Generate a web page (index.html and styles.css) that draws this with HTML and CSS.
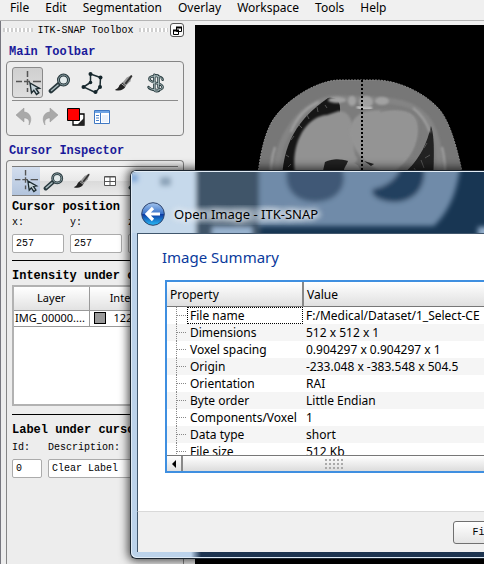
FILE: index.html
```
<!DOCTYPE html>
<html lang="en">
<head>
    <meta charset="UTF-8" />
    <meta name="viewport" content="width=device-width, initial-scale=1" />
    <title>ITK-SNAP</title>
    <link rel="stylesheet" href="styles.css">
</head>
<body>
    <!-- shared toolbar icons -->
    <svg class="defs" width="0" height="0" aria-hidden="true">
        <symbol id="i-cross" viewBox="0 0 28 26">
            <path d="M13.5 1v6M13.5 9v6M13.5 18v4M2 11.500h6M10 11.500h6M19 11.500h8" stroke="#555" stroke-width="1.500" fill="none" />
            <path d="M16 13l1.500 10 2.300-2.600 2.700 4 2.300-1.600-2.700-3.900 3.400-.6z" fill="#c5d3da" stroke="#1c2b30" stroke-width="1.400" />
        </symbol>
        <symbol id="i-zoom" viewBox="0 0 24 24">
            <path d="M3 20l8-7" stroke="#27373c" stroke-width="4.600" stroke-linecap="round" />
            <path d="M3.500 19.500l6.500-5.500" stroke="#a9babd" stroke-width="1.500" stroke-linecap="round" />
            <circle cx="15.500" cy="9" r="5" fill="#e3ebec" stroke="#27373c" stroke-width="3" />
            <circle cx="15.500" cy="9" r="5" fill="none" stroke="#8ca2a6" />
        </symbol>
        <symbol id="i-poly" viewBox="0 0 24 24">
            <path d="M10.500 3l10 3.500-.5 9.500-4.500 5.500-12-5.500 7-4.500z" fill="none" stroke="#1d2e33" stroke-width="1.500" />
            <g fill="#14252b">
                <circle cx="10.500" cy="3" r="2" /><circle cx="20.500" cy="6.500" r="2" /><circle cx="20" cy="16" r="2" />
                <circle cx="15.500" cy="21" r="2" /><circle cx="3.500" cy="16" r="2" /><circle cx="10.500" cy="11.500" r="1.800" />
            </g>
        </symbol>
        <symbol id="i-brush" viewBox="0 0 24 24">
            <path d="M21 3l-2 7-5 5-4-3 5-6z" fill="#9a9a9a" />
            <path d="M20.500 4l-7 9" stroke="#333" stroke-width="2" />
            <path d="M14 15l-4-3.500-3 3c-1 3-2.500 4-5 5 5 1.500 10 .5 12-4.500z" fill="#222" />
            <path d="M9 12.500l4.500 3.500" stroke="#c8c8c8" stroke-width="1" />
        </symbol>
        <symbol id="i-snake" viewBox="0 0 24 24">
            <path d="M20 8c0-5-16-6-16-1 0 6 16 4 16 10 0 5-15 4-17 0M10 2v18c0 3 6 2 6 0M10 5c0-3 5-3 5 0v12" fill="none" stroke="#22363a" stroke-width="3" stroke-linecap="round" />
            <path d="M20 8c0-5-16-6-16-1 0 6 16 4 16 10 0 5-15 4-17 0M10 2v18c0 3 6 2 6 0M10 5c0-3 5-3 5 0v12" fill="none" stroke="#b5c5c7" stroke-width="1" stroke-linecap="round" />
        </symbol>
        <symbol id="i-undo" viewBox="0 0 20 20">
            <path d="M2 8l8-7v4c6 0 9 7 5 13 1-5-1-7-5-7v4z" fill="#a9a9a9" stroke="#969696" stroke-width=".5" />
        </symbol>
        <symbol id="i-label" viewBox="0 0 20 20">
            <path d="M7 7h11v11h-11z" fill="#fff" stroke="#000" stroke-width="1.300" />
            <path d="M18 11v7h-7z" fill="#222" />
            <path d="M1.500 1.500h12v12h-12z" fill="#f00" stroke="#000" />
        </symbol>
        <symbol id="i-layout" viewBox="0 0 16 14">
            <path d="M.5.5h15v13h-15z" fill="#fff" stroke="#3f78c3" />
            <path d="M1 1h14v2h-14z" fill="#6fa4e4" />
            <path d="M6.500 3v10" stroke="#3f78c3" />
            <path d="M2 5.500h3M2 8h3M2 10.500h3" stroke="#4a80c8" />
            <path d="M8 5h6v7h-6z" fill="#eaf1fb" />
        </symbol>
        <symbol id="i-table" viewBox="0 0 12 12">
            <path d="M.5 1.500h11v9h-11z" fill="#fff" stroke="#555" />
            <path d="M1 2h10M1 6.500h10M6 2v9" stroke="#555" fill="none" />
        </symbol>
    </svg>

    <nav class="menubar">
        <button>File</button>
        <button>Edit</button>
        <button>Segmentation</button>
        <button>Overlay</button>
        <button>Workspace</button>
        <button>Tools</button>
        <button>Help</button>
    </nav>

    <main class="workspace">
        <aside class="sidebar">
            <div class="dock-title">
                <span class="grip"></span>
                <span>ITK-SNAP Toolbox</span>
                <span class="grip"></span>
                <button class="float-btn" aria-label="Float">
                    <svg width="9" height="9" viewBox="0 0 9 9"><path d="M3.500 1.500h5v4h-5zM.5 4.500h5v4h-5z" fill="#fff" stroke="#000" /><path d="M3 1.500h6M0 4.500h6" stroke="#000" stroke-width="2" /></svg>
                </button>
            </div>

            <h2 class="panel-title">Main Toolbar</h2>
            <div class="panel main-tools">
                <div class="tools">
                    <button class="tool active" aria-label="Crosshair"><svg width="28" height="26"><use href="#i-cross" /></svg></button>
                    <button class="tool" aria-label="Zoom"><svg width="24" height="24"><use href="#i-zoom" /></svg></button>
                    <button class="tool" aria-label="Polygon"><svg width="24" height="24"><use href="#i-poly" /></svg></button>
                    <button class="tool" aria-label="Paintbrush"><svg width="22" height="22"><use href="#i-brush" /></svg></button>
                    <button class="tool" aria-label="Snake"><svg width="20" height="22"><use href="#i-snake" /></svg></button>
                </div>
                <div class="tools actions">
                    <button class="tool" aria-label="Undo"><svg width="20" height="20"><use href="#i-undo" /></svg></button>
                    <button class="tool" aria-label="Redo"><svg class="flip" width="20" height="20"><use href="#i-undo" /></svg></button>
                    <button class="tool" aria-label="Label color"><svg width="20" height="20"><use href="#i-label" /></svg></button>
                    <button class="tool" aria-label="Layout"><svg width="16" height="14"><use href="#i-layout" /></svg></button>
                </div>
            </div>

            <h2 class="panel-title">Cursor Inspector</h2>
            <div class="panel inspector">
                <div class="tabs">
                    <button class="tab active" aria-label="Cursor"><svg width="26" height="24"><use href="#i-cross" /></svg></button>
                    <button class="tab" aria-label="Zoom"><svg width="22" height="22"><use href="#i-zoom" /></svg></button>
                    <button class="tab" aria-label="Paintbrush"><svg width="20" height="20"><use href="#i-brush" /></svg></button>
                    <button class="tab" aria-label="Table"><svg width="12" height="12"><use href="#i-table" /></svg></button>
                    <button class="tab" aria-label="Zoom all"><svg width="20" height="20"><use href="#i-zoom" /></svg></button>
                </div>

                <section class="block position">
                    <h3>Cursor position</h3>
                    <div class="fields">
                        <label class="coord">x:<input type="text" value="257" /></label>
                        <label class="coord">y:<input type="text" value="257" /></label>
                        <label class="coord">z:<input type="text" value="1" /></label>
                    </div>
                </section>

                <section class="block">
                    <h3>Intensity under cursor</h3>
                    <div class="layer-list">
                        <table>
                            <thead>
                                <tr><th>Layer</th><th>Intensity</th></tr>
                            </thead>
                            <tbody>
                                <tr><td>IMG_00000....</td><td><span class="swatch"></span>122</td></tr>
                            </tbody>
                        </table>
                    </div>
                </section>

                <section class="block">
                    <h3>Label under cursor</h3>
                    <div class="fields label-fields">
                        <label class="id">Id:<input type="text" value="0" /></label>
                        <label class="desc">Description:<input type="text" value="Clear Label" /></label>
                    </div>
                </section>
            </div>
        </aside>

        <div class="view">
            <svg class="slice" viewBox="0 0 289 160">
                <defs>
                    <filter id="soft"><feGaussianBlur stdDeviation="1.200" /></filter>
                    <filter id="edge"><feGaussianBlur stdDeviation=".6" /></filter>
                </defs>
                <path d="M62 160C64 132 70 105 80 92C94 73 122 56 143 55H180C205 55 232 70 244 84C257 99 264 132 270 160z" fill="#777" stroke="#8c8c8c" stroke-dasharray="2 1" />
                <path d="M81 160C80 138 84 118 98 99C110 82 128 73 142 73C170 76 205 71 225 87C243 101 246 128 245 160z" fill="#7c7c7c" stroke="#848484" stroke-width="6" filter="url(#soft)" />
                <path d="M87 160C87 118 103 94 133 73C142 72 146 76 145 88L138 92L110 112L105 160H87z" fill="#161616" filter="url(#edge)" />
                <path d="M236 101C240 112 239 135 238 160H190C208 151 228 137 236 101z" fill="#202020" filter="url(#edge)" />
                <!-- lung vessels -->
                <path d="M96 115l3-4M104 100l3 3M112 90l2 4M122 82l1 5M130 80l2 3M91 130l3 2M93 142l3-3M232 118l-3 5M235 130l-5 3M226 135l3 8M219 143l4 6M211 148l2 7M233 145l-4 4M204 152l4 3" stroke="#555" fill="none" />
                <path d="M96 107C102 91 112 82 124 77M218 83c8 6 13 13 17 24M80 122c-4 12-4 20-4 36M247 122c3 12 3 20 3 36" fill="none" stroke="#a4a4a4" stroke-width="2" filter="url(#soft)" />
                <path d="M102 160C92 120 111 91 132 90L144 86C165 86 155 125 162 133C164 142 141 144 132 160z" fill="#929292" filter="url(#soft)" />
                <path d="M156 115C151 98 163 87 174 86C195 84 220 83 223 96C227 119 211 146 193 148C180 147 162 132 156 115z" fill="#949494" filter="url(#soft)" />
                <path d="M185 86q34-10 39 13t-20 46" fill="none" stroke="#7c7c7c" stroke-width="2" filter="url(#soft)" />
                <g fill="#a2a2a2" filter="url(#soft)">
                    <ellipse cx="142" cy="75" rx="9" ry="3" /><ellipse cx="157" cy="76" rx="4" ry="5" />
                    <ellipse cx="171" cy="77" rx="7" ry="6" /><ellipse cx="187" cy="76" rx="7" ry="4" />
                </g>
                <path d="M162 82q8 3 15 1" stroke="#ddd" stroke-width="2" fill="none" filter="url(#soft)" />
                <path d="M130 137c8-4 16-3 23-1l-6 14h-20zM169 136l10 3-3 2z" fill="#222" filter="url(#edge)" />
                <ellipse cx="157" cy="146" rx="8" ry="8" fill="#929292" />
                <path d="M167 55v105" stroke="#000" stroke-width="2" stroke-dasharray="2 2" />
            </svg>
        </div>
    </main>

    <div class="dialog" role="dialog" aria-labelledby="dlg-title">
        <header class="titlebar">
            <svg class="glass" width="484" height="62" viewBox="0 0 484 62" aria-hidden="true">
                <defs><filter id="blur" x="-10%" y="-10%" width="120%" height="120%"><feGaussianBlur stdDeviation="2.500" /></filter></defs>
                <rect width="484" height="62" fill="#183653" />
                <g filter="url(#blur)">
                    <path d="M-10-10H64V80H-10z" fill="#c6d9eb" />
                    <path d="M64-10h64v84h-64z" fill="#405469" />
                    <path d="M127-10H329C325 20 318 38 302 54H127z" fill="#6f8ba9" />
                    <path d="M155-4c-4 20 8 34 28 34s34-14 27-34z" fill="#405876" />
                    <path d="M292-4c2 20-10 33-28 34-14 0-27-6-23-13 12-2 25-10 28-23z" fill="#24415f" />
                    <path d="M80 55h40v10h-40zM346 55h20v10h-20z" fill="#9ab4d0" />
                    <path d="M28 5h11v9h-11z" fill="#8ba2b8" />
                    <path d="M-2 2h8v8h-8z" fill="#79a6d8" />
                </g>
                <ellipse cx="112" cy="43" rx="78" ry="8" fill="#c8d6e4" opacity=".5" filter="url(#blur)" />
            </svg>
            <button class="back" aria-label="Back">
                <svg width="24" height="24" viewBox="0 0 24 24">
                    <defs>
                        <linearGradient id="orb" x2="0" y2="1">
                            <stop offset="0" stop-color="#a4c5ee" /><stop offset=".48" stop-color="#3a73ca" />
                            <stop offset=".5" stop-color="#0a35a0" /><stop offset="1" stop-color="#28bdf8" />
                        </linearGradient>
                    </defs>
                    <circle cx="12" cy="12" r="11.300" fill="url(#orb)" stroke="#30456d" />
                    <path d="M12 6l-6 6 6 6M7 12h12" fill="none" stroke="#fff" stroke-width="3.200" />
                </svg>
            </button>
            <span id="dlg-title">Open Image - ITK-SNAP</span>
        </header>
        <div class="page">
            <h1>Image Summary</h1>
            <div class="summary">
                <div class="rows">
                    <table>
                        <thead>
                            <tr><th>Property</th><th>Value</th></tr>
                        </thead>
                        <tbody>
                            <tr class="current"><td><span>File name</span></td><td>F:/Medical/Dataset/1_Select-CE</td></tr>
                            <tr><td><span>Dimensions</span></td><td>512 x 512 x 1</td></tr>
                            <tr><td><span>Voxel spacing</span></td><td>0.904297 x 0.904297 x 1</td></tr>
                            <tr><td><span>Origin</span></td><td>-233.048 x -383.548 x 504.5</td></tr>
                            <tr><td><span>Orientation</span></td><td>RAI</td></tr>
                            <tr><td><span>Byte order</span></td><td>Little Endian</td></tr>
                            <tr><td><span>Components/Voxel</span></td><td>1</td></tr>
                            <tr><td><span>Data type</span></td><td>short</td></tr>
                            <tr><td><span>File size</span></td><td>512 Kb</td></tr>
                        </tbody>
                    </table>
                </div>
                <div class="scrollbar">
                    <button aria-label="Scroll left"><svg width="4" height="8" viewBox="0 0 4 8"><path d="M4 0v8l-4-4z" /></svg></button>
                    <div class="thumb"><span class="dots"></span></div>
                </div>
            </div>
        </div>
        <footer class="buttons">
            <button>Finish</button>
        </footer>
    </div>
</body>
</html>
```
FILE: styles.css
```
* {
    box-sizing: border-box;
}
body {
    margin: 0;
    height: 100vh;
    display: flex;
    flex-direction: column;
    position: relative;
    overflow: hidden;
    background: #f0f0f0;
    color: #000;
    font-family: "Noto Sans", sans-serif;
    font-size: 12px;
}
button {
    font: inherit;
    color: inherit;
    border: none;
    background: none;
    padding: 0;
}
svg {
    display: block;
}
h1, h2, h3 {
    margin: 0;
}
table {
    border-collapse: collapse;
    table-layout: fixed;
    width: 100%;
}
.defs {
    position: absolute;
}

/* menu bar */
.menubar {
    display: flex;
    gap: 16px;
    height: 21px;
    padding-left: 10px;
    line-height: 16px;
    border-bottom: 1px solid #b4b4b4;
    flex-shrink: 0;
}
.menubar button {
    height: 16px;
}
.workspace {
    flex: 1;
    display: flex;
    min-height: 0;
}

/* left dock */
.sidebar {
    width: 195px;
    flex-shrink: 0;
    display: flex;
    flex-direction: column;
    padding: 2px 11px 0 5px;
    border-left: 1px solid #77777f;
    background: #ededed;
    font-family: "Liberation Mono", monospace;
    font-size: 10px;
}
.dock-title {
    display: flex;
    align-items: center;
    gap: 5px;
    height: 14px;
    margin-left: -3px;
    white-space: nowrap;
}
.grip {
    flex: 1;
    height: 4px;
    background: repeating-linear-gradient(90deg, #cfcfcf 0 2px, #fff 2px 4px);
}
.float-btn {
    display: grid;
    place-items: center;
    width: 14px;
    height: 14px;
    margin-left: -3px;
    border: 1px solid #555;
    border-radius: 3px;
    background: #fafafa;
}
.panel-title {
    padding: 8px 0 0 3px;
    height: 24px;
    font-size: 12px;
    line-height: 14px;
    color: #1a1a9a;
}
.panel {
    border: 1px solid #858585;
    border-radius: 4px;
    padding: 5px;
}
.main-tools {
    height: 75px;
}
.tools {
    display: flex;
    height: 34px;
    gap: 1px;
    border-bottom: 1px solid #8b8b8b;
}
.tool {
    width: 31px;
    height: 31px;
    display: grid;
    place-items: center;
}
.tool.active {
    border: 1px solid #8a8a8a;
    border-radius: 3px;
    background: linear-gradient(#cfcfcf, #dedede);
}
.actions {
    border: none;
    gap: 2px;
}
.actions .tool {
    width: 24px;
    height: 32px;
}
.flip {
    transform: scaleX(-1);
}
.inspector {
    flex: 1;
    border-bottom: none;
    border-radius: 4px 4px 0 0;
    min-height: 0;
    overflow: hidden;
}
.tabs {
    display: flex;
    height: 30px;
    border: 1px solid #7c7c7c;
    border-width: 1px 0;
    background: linear-gradient(#f6f6f6, #e8e8e8 50%, #dadada 50%, #e9e9e9);
}
.tab {
    width: 28px;
    display: grid;
    place-items: center;
}
.tab.active {
    background: linear-gradient(#d3deee, #b2c4dd);
}
.block {
    padding: 8px 0;
    border-top: 1px solid #000;
}
.position {
    padding: 4px 0 7px;
    border-top: none;
}
.block h3 {
    font-size: 12px;
    line-height: 14px;
    white-space: nowrap;
}
.fields {
    display: flex;
    gap: 6px;
    padding-top: 2px;
}
.label-fields {
    padding-top: 4px;
}
.fields label {
    display: flex;
    flex-direction: column;
    line-height: 14px;
    gap: 4px;
}
.fields input {
    width: 100%;
    height: 19px;
    padding: 0 3px;
    border: 1px solid #ababab;
    border-radius: 2px;
    background: #fff;
    font: inherit;
    color: inherit;
}
.coord {
    width: 52px;
    flex-shrink: 0;
}
.id {
    width: 30px;
}
.desc {
    flex: 1;
}
.layer-list {
    height: 121px;
    margin-top: 2px;
    border: 2px solid #b2b2b2;
    background: #fff;
    font-family: "Noto Sans", sans-serif;
    font-size: 11px;
}
.layer-list th {
    height: 23px;
    padding: 0;
    line-height: 18px;
    font-weight: normal;
    border: 1px solid #999;
    border-top: none;
    background: linear-gradient(#fff, #e2e2e2);
}
.layer-list th:first-child {
    width: 75px;
    border-left: none;
}
.layer-list td {
    height: 16px;
    padding: 0 2px 0 1px;
    line-height: 14px;
    border: 1px solid #999;
    border-left: none;
    white-space: nowrap;
    overflow: hidden;
}
.swatch {
    display: inline-block;
    width: 12px;
    height: 12px;
    margin: 1px 8px 0 3px;
    vertical-align: top;
    border: 1px solid #000;
    background: #999;
}

/* slice viewer */
.view {
    flex: 1;
    margin-top: 4px;
    background: #000;
    overflow: hidden;
}
.slice {
    width: 100%;
}

/* wizard window */
.dialog {
    position: absolute;
    top: 170px;
    left: 130px;
    right: 0;
    bottom: 5px;
    display: flex;
    flex-direction: column;
    padding: 0 0 6px 6px;
    border: 1px solid #1b2530;
    border-right: none;
    border-radius: 6px 0 0 6px;
    background: linear-gradient(90deg, #bcd3eb 60px, #1d3450 70px);
    box-shadow: inset 1px -1px 0 #dfebf6, 0 0 10px 2px rgba(0, 0, 0, 0.7);
}
.titlebar {
    position: relative;
    display: flex;
    align-items: center;
    gap: 9px;
    height: 62px;
    margin-left: -6px;
    padding: 22px 0 0 9px;
    overflow: hidden;
    flex-shrink: 0;
    border-top: 1px solid #e2ecf5;
    border-left: 1px solid #dfebf6;
    border-radius: 5px 0 0 0;
    font-size: 13px;
    text-shadow: 0 0 6px #fff, 0 0 8px #fff;
}
.glass {
    position: absolute;
    top: 0;
    left: 0;
}
.back, #dlg-title {
    position: relative;
}
.page {
    flex: 1;
    padding: 11px 0 0 27px;
    background: #fff;
    border: 1px solid #40566c;
    border-width: 1px 0 0 1px;
}
h1 {
    margin-left: -3px;
    font-size: 15px;
    font-weight: normal;
    line-height: 24px;
    color: #0a3a9c;
}
.summary {
    margin-top: 11px;
    border: 2px solid #3f8fe0;
    border-right: none;
}
.rows {
    height: 173px;
    overflow: hidden;
}
.rows th {
    height: 24px;
    padding: 1px 0 0 3px;
    text-align: left;
    font-weight: normal;
    border-bottom: 1px solid #777;
    background: linear-gradient(#fff, #e0e0e0);
}
.rows th:first-child {
    width: 136px;
    border-right: 2px solid #888;
}
.rows td {
    height: 17px;
    padding: 0 0 0 3px;
    line-height: 17px;
    white-space: nowrap;
}
.rows tr:nth-child(even) td {
    background: #f5f5f5;
}
.rows td:first-child {
    padding: 0 0 0 9px;
}
.rows td span {
    position: relative;
    display: block;
    height: 17px;
    padding-left: 13px;
    border-left: 1px dotted #888;
}
/* branch from the tree line to the item */
.rows td span::before {
    content: "";
    position: absolute;
    left: 0;
    top: 8px;
    width: 9px;
    border-top: 1px dotted #888;
}
.rows .current span::after {
    content: "";
    position: absolute;
    inset: 0 0 0 10px;
    border: 1px dotted #000;
}
.scrollbar {
    display: flex;
    height: 16px;
    border-top: 1px solid #777;
}
.scrollbar button {
    width: 16px;
    display: grid;
    place-items: center;
    border-right: 2px solid #888;
    background: linear-gradient(#fff, #e0e0e0);
}
.thumb {
    flex: 1;
    display: grid;
    place-items: center;
    background: linear-gradient(#fff, #dcdcdc);
}
.dots {
    width: 20px;
    height: 12px;
    background: radial-gradient(circle, #aaa 1px, transparent 1px) 0 0 / 4px 4px;
}
.buttons {
    display: flex;
    justify-content: flex-end;
    align-items: center;
    height: 41px;
    flex-shrink: 0;
    overflow: hidden;
    border-top: 1px solid #d9d9d9;
    border-left: 1px solid #40566c;
    background: #f0f0f0;
}
.buttons button {
    width: 75px;
    height: 23px;
    margin-right: -44px;
    flex-shrink: 0;
    border: 1px solid #707070;
    border-radius: 3px;
    background: linear-gradient(#fff, #e4e4e4);
    font-family: "Liberation Mono", monospace;
    font-size: 10px;
}
```
